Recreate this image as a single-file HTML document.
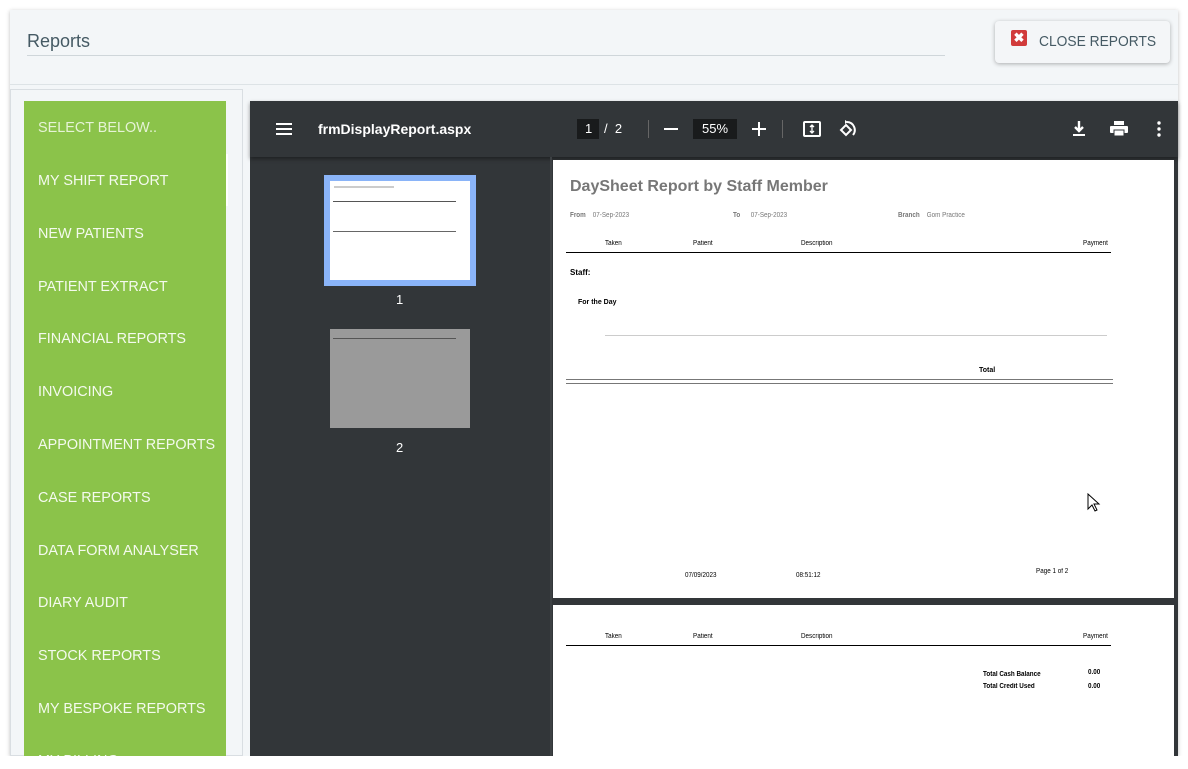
<!DOCTYPE html>
<html><head><meta charset="utf-8"><style>
*{margin:0;padding:0;box-sizing:border-box}
body{width:1188px;height:766px;background:#fff;position:relative;overflow:hidden;font-family:"Liberation Sans",Arial,sans-serif}
.a{position:absolute}
.card{left:10px;top:10px;width:1168px;height:746px;background:#f3f6f8;box-shadow:0 1px 4px rgba(0,0,0,.25)}
.menu div{position:absolute;left:38px;color:#f4faee;font-size:15px;transform:scaleX(.96);transform-origin:left;white-space:nowrap}
.p{font-family:"Liberation Sans",Arial,sans-serif;color:#000;position:absolute;white-space:nowrap}
.s7{font-size:7px;transform:scaleX(.9);transform-origin:left}
.g{color:#777}
</style></head><body>
<div class="a card"></div>
<div class="a" style="left:27px;top:31px;font-size:18px;color:#455a64">Reports</div>
<div class="a" style="left:27px;top:55px;width:918px;height:1px;background:#cfd6da"></div>
<div class="a" style="left:10px;top:84px;width:1168px;height:1px;background:#dde3e6"></div>
<div class="a" style="left:995px;top:21px;width:175px;height:42px;background:#f4f6f8;border-radius:4px;box-shadow:0 1px 4px rgba(0,0,0,.3)"></div>
<div class="a" style="left:1011px;top:30px;width:16px;height:16px;background:#d13b3b;border-radius:2px;color:#fff;font-size:13px;font-weight:bold;line-height:16px;text-align:center">✖</div>
<div class="a" style="left:1039px;top:33px;font-size:15px;color:#455a64;transform:scaleX(.92);transform-origin:left;white-space:nowrap">CLOSE REPORTS</div>
<div class="a" style="left:10px;top:89px;width:233px;height:667px;border:1px solid #d9dee2;background:#f3f6f8"></div>
<div class="a" style="left:24px;top:101px;width:202px;height:655px;background:#8bc34a"></div>
<div class="a" style="left:226px;top:154px;width:2px;height:52px;background:#fff"></div>
<div class="menu">
<div style="top:119px;color:#e6f3d6">SELECT BELOW..</div>
<div style="top:172px">MY SHIFT REPORT</div>
<div style="top:225px">NEW PATIENTS</div>
<div style="top:278px">PATIENT EXTRACT</div>
<div style="top:330px">FINANCIAL REPORTS</div>
<div style="top:383px">INVOICING</div>
<div style="top:436px">APPOINTMENT REPORTS</div>
<div style="top:489px">CASE REPORTS</div>
<div style="top:542px">DATA FORM ANALYSER</div>
<div style="top:594px">DIARY AUDIT</div>
<div style="top:647px">STOCK REPORTS</div>
<div style="top:700px">MY BESPOKE REPORTS</div>
<div style="top:752px">MY BILLING</div>
</div>
<div class="a" style="left:250px;top:101px;width:928px;height:655px;background:#323639"></div>
<div class="a" style="left:250px;top:101px;width:928px;height:56px;background:#323639;box-shadow:0 2px 4px rgba(0,0,0,.4)"></div>
<div class="a" style="left:550px;top:157px;width:2px;height:599px;background:#3d4144"></div>
<svg class="a" style="left:276px;top:122px" width="16" height="14"><path d="M0 2h16M0 7h16M0 12h16" stroke="#fff" stroke-width="2"/></svg>
<div class="a" style="left:318px;top:121px;color:#fff;font-size:14px;font-weight:bold">frmDisplayReport.aspx</div>
<div class="a" style="left:577px;top:119px;width:22px;height:20px;background:#191b1c"></div>
<div class="a" style="left:585px;top:121px;color:#fff;font-size:13px">1</div>
<div class="a" style="left:604px;top:121px;color:#fff;font-size:13px">/ &nbsp;2</div>
<div class="a" style="left:648px;top:120px;width:1px;height:18px;background:#666"></div>
<div class="a" style="left:664px;top:128px;width:14px;height:2px;background:#fff"></div>
<div class="a" style="left:693px;top:119px;width:44px;height:20px;background:#191b1c;color:#fff;font-size:13px;text-align:center;line-height:20px">55%</div>
<svg class="a" style="left:752px;top:122px" width="14" height="14"><path d="M7 0v14M0 7h14" stroke="#fff" stroke-width="2"/></svg>
<div class="a" style="left:782px;top:120px;width:1px;height:18px;background:#666"></div>
<svg class="a" style="left:802px;top:120px" width="20" height="18"><rect x="2" y="2" width="16" height="14" rx="1" fill="none" stroke="#fff" stroke-width="2"/><path d="M10 5v8M8 7l2-2 2 2M8 11l2 2 2-2" stroke="#fff" fill="none" stroke-width="1.3"/></svg>
<svg class="a" style="left:838px;top:119px" width="20" height="20"><path d="M8 6l5 5-5 5-5-5z" fill="none" stroke="#fff" stroke-width="2"/><path d="M9 3a8 8 0 0 1 6 13" fill="none" stroke="#fff" stroke-width="2"/><path d="M7 1l3 2-3 2z" fill="#fff"/></svg>
<svg class="a" style="left:1072px;top:121px" width="14" height="16"><path d="M7 0v9M3 6l4 4 4-4" stroke="#fff" stroke-width="2.4" fill="none"/><path d="M1 14h12" stroke="#fff" stroke-width="2"/></svg>
<svg class="a" style="left:1110px;top:121px" width="18" height="16"><rect x="4" y="0" width="10" height="4" fill="#fff"/><rect x="0" y="5" width="18" height="7" rx="1" fill="#fff"/><rect x="4" y="9" width="10" height="6" fill="#fff" stroke="#323639" stroke-width="1"/></svg>
<svg class="a" style="left:1156px;top:121px" width="6" height="16"><circle cx="3" cy="2" r="1.7" fill="#fff"/><circle cx="3" cy="8" r="1.7" fill="#fff"/><circle cx="3" cy="14" r="1.7" fill="#fff"/></svg>
<div class="a" style="left:324px;top:175px;width:152px;height:111px;background:#8ab4f8"></div>
<div class="a" style="left:330px;top:181px;width:140px;height:99px;background:#fff"></div>
<div class="a" style="left:333px;top:201px;width:123px;height:1px;background:#555"></div>
<div class="a" style="left:333px;top:231px;width:123px;height:1px;background:#666"></div>
<div class="a" style="left:334px;top:186px;width:60px;height:2px;background:#ccc"></div>
<div class="a" style="left:396px;top:292px;color:#fff;font-size:13px">1</div>
<div class="a" style="left:330px;top:329px;width:140px;height:99px;background:#9a9a9a"></div>
<div class="a" style="left:333px;top:338px;width:123px;height:1px;background:#555"></div>
<div class="a" style="left:396px;top:440px;color:#fff;font-size:13px">2</div>
<div class="a" style="left:553px;top:160px;width:621px;height:438px;background:#fff"></div>
<div class="p" style="left:570px;top:178px;font-size:16px;font-weight:bold;color:#777">DaySheet Report by Staff Member</div>
<div class="p s7 g" style="left:570px;top:212px"><b>From</b> &nbsp;&nbsp;&nbsp;07-Sep-2023</div>
<div class="p s7 g" style="left:733px;top:212px"><b>To</b> &nbsp;&nbsp;&nbsp;&nbsp;&nbsp;07-Sep-2023</div>
<div class="p s7 g" style="left:898px;top:212px"><b>Branch</b> &nbsp;&nbsp;&nbsp;Gom Practice</div>
<div class="p s7" style="left:605px;top:240px">Taken</div>
<div class="p s7" style="left:693px;top:240px">Patient</div>
<div class="p s7" style="left:801px;top:240px">Description</div>
<div class="p s7" style="left:1083px;top:240px">Payment</div>
<div class="a" style="left:566px;top:252px;width:545px;height:1px;background:#000"></div>
<div class="p" style="left:570px;top:268px;font-size:8px;font-weight:bold">Staff:</div>
<div class="p" style="left:578px;top:299px;font-size:7px;font-weight:bold">For the Day</div>
<div class="a" style="left:605px;top:335px;width:502px;height:1px;background:#ccc"></div>
<div class="p" style="left:979px;top:367px;font-size:7px;font-weight:bold">Total</div>
<div class="a" style="left:566px;top:379px;width:547px;height:1px;background:#777"></div>
<div class="a" style="left:566px;top:383px;width:547px;height:1px;background:#777"></div>
<div class="p s7" style="left:685px;top:572px">07/09/2023</div>
<div class="p s7" style="left:796px;top:572px">08:51:12</div>
<div class="p s7" style="left:1036px;top:568px">Page 1 of 2</div>
<svg class="a" style="left:1087px;top:493px" width="14" height="20"><path d="M1 1v15l4-4 3 6 2-1-3-6h5z" fill="#fff" stroke="#000" stroke-width="1"/></svg>
<div class="a" style="left:553px;top:605px;width:621px;height:151px;background:#fff"></div>
<div class="p s7" style="left:605px;top:633px">Taken</div>
<div class="p s7" style="left:693px;top:633px">Patient</div>
<div class="p s7" style="left:801px;top:633px">Description</div>
<div class="p s7" style="left:1083px;top:633px">Payment</div>
<div class="a" style="left:566px;top:645px;width:545px;height:1px;background:#000"></div>
<div class="p s7" style="left:983px;top:671px;font-weight:bold">Total Cash Balance</div>
<div class="p s7" style="left:1088px;top:669px;font-weight:bold">0.00</div>
<div class="p s7" style="left:983px;top:683px;font-weight:bold">Total Credit Used</div>
<div class="p s7" style="left:1088px;top:683px;font-weight:bold">0.00</div>
<div class="a" style="left:0;top:756px;width:1188px;height:10px;background:#fff"></div>
</body></html>
